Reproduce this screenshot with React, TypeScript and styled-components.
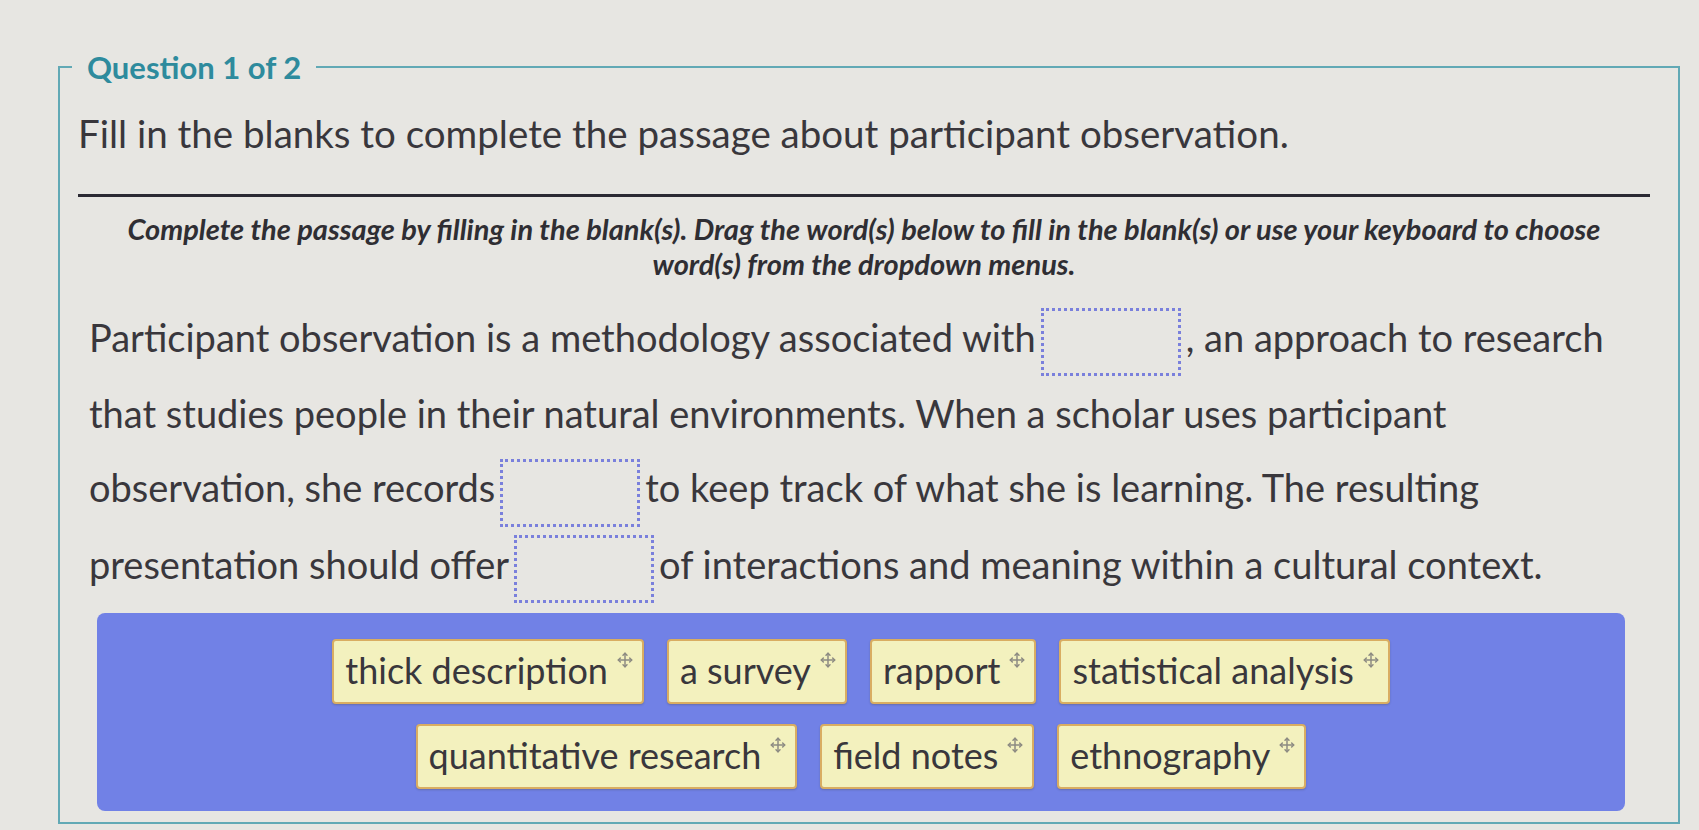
import React from "react";
import styled, { createGlobalStyle } from "styled-components";
import { Move } from "lucide-react";

const Global = createGlobalStyle`
  html, body {
    margin: 0;
    padding: 0;
    background: #e7e6e2;
  }
  body {
    font-family: Lato, "Liberation Sans", sans-serif;
    color: #38363b;
  }
`;

const Page = styled.div`
  width: 1699px;
  height: 830px;
  overflow: hidden;
  box-sizing: border-box;
  padding: 48px 0 0 58px;
`;

const Frame = styled.fieldset`
  margin: 0;
  width: 1622px;
  height: 776px;
  box-sizing: border-box;
  border: 2px solid #62a9b5;
  padding: 0 28px 0 18px;
  display: block;
`;

const Legend = styled.legend`
  margin-left: -6px;
  padding: 0 15px;
  font-size: 31px;
  line-height: 38px;
  font-weight: 700;
  color: #2e8b9d;
`;

const Title = styled.h1`
  margin: 24px 0 0 0;
  font-size: 38.5px;
  line-height: 46px;
  font-weight: 400;
  color: #39373c;
`;

const Rule = styled.div`
  margin-top: 38px;
  height: 3px;
  background: #2b2a33;
`;

const Instructions = styled.p`
  margin: 14px 24px 0 24px;
  text-align: center;
  font-size: 29px;
  line-height: 35px;
  font-weight: 700;
  font-style: italic;
  color: #2f2e33;
`;

const Passage = styled.p`
  margin: 19px 0 0 11px;
  font-size: 38px;
  line-height: 74px;
  color: #39373c;
  white-space: nowrap;
`;

const Blank = styled.span`
  display: inline-block;
  width: 140px;
  height: 68px;
  margin: 0 5px;
  vertical-align: middle;
  border: 3px dotted #7a80dc;
  box-sizing: border-box;
`;

const Bank = styled.div`
  margin: 10px 25px 0 19px;
  background: #7181e6;
  border-radius: 8px;
  padding: 26px 190px 22px 190px;
  display: flex;
  flex-wrap: wrap;
  justify-content: center;
  gap: 20px 23px;
`;

const Tile = styled.div`
  display: inline-flex;
  align-items: flex-start;
  gap: 9px;
  height: 65px;
  box-sizing: border-box;
  padding: 7px 9px 0 11px;
  background: #f3f1be;
  border: 2px solid #d9ad62;
  border-radius: 4px;
  box-shadow: 0 1px 2px rgba(60, 50, 20, 0.25);
  font-size: 36px;
  line-height: 44px;
  color: #39373c;
  white-space: nowrap;
`;

const Handle = styled(Move)`
  margin-top: 4px;
  color: #8c8a82;
  flex: none;
`;

const words = [
  "thick description",
  "a survey",
  "rapport",
  "statistical analysis",
  "quantitative research",
  "field notes",
  "ethnography",
];

export default function App() {
  return (
    <>
      <Global />
      <Page>
        <Frame>
          <Legend>Question 1 of 2</Legend>
          <Title>Fill in the blanks to complete the passage about participant observation.</Title>
          <Rule />
          <Instructions>
            Complete the passage by filling in the blank(s). Drag the word(s) below to fill in the
            blank(s) or use your keyboard to choose word(s) from the dropdown menus.
          </Instructions>
          <Passage>
            Participant observation is a methodology associated with
            <Blank aria-label="blank 1" />, an approach to research
            <br />
            that studies people in their natural environments. When a scholar uses participant
            <br />
            observation, she records
            <Blank aria-label="blank 2" />
            to keep track of what she is learning. The resulting
            <br />
            presentation should offer
            <Blank aria-label="blank 3" />
            of interactions and meaning within a cultural context.
          </Passage>
          <Bank>
            {words.map((w) => (
              <Tile key={w}>
                {w}
                <Handle size={16} strokeWidth={2.2} />
              </Tile>
            ))}
          </Bank>
        </Frame>
      </Page>
    </>
  );
}
